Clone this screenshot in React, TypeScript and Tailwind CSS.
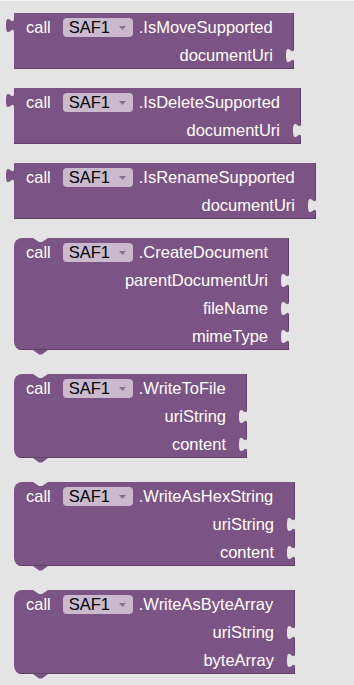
import React from "react";

const TAB = "M8,0 C8,10 0,-8 0,7.5 C0,23 8,5 8,15 Z";

type BlockDef = {
  name: string;
  params: string[];
  width: string;
  statement?: boolean;
  gap: string;
};

const blocks: BlockDef[] = [
  { name: ".IsMoveSupported", params: ["documentUri"], width: "w-[280px]", gap: "mb-[19px]" },
  { name: ".IsDeleteSupported", params: ["documentUri"], width: "w-[287px]", gap: "mb-[19px]" },
  { name: ".IsRenameSupported", params: ["documentUri"], width: "w-[302px]", gap: "mb-[19px]" },
  {
    name: ".CreateDocument",
    params: ["parentDocumentUri", "fileName", "mimeType"],
    width: "w-[275px]",
    statement: true,
    gap: "mb-[24px]",
  },
  { name: ".WriteToFile", params: ["uriString", "content"], width: "w-[233px]", statement: true, gap: "mb-[24px]" },
  { name: ".WriteAsHexString", params: ["uriString", "content"], width: "w-[281px]", statement: true, gap: "mb-[24px]" },
  { name: ".WriteAsByteArray", params: ["uriString", "byteArray"], width: "w-[281px]", statement: true, gap: "mb-0" },
];

function Dropdown() {
  return (
    <div className="flex h-[19px] w-[70px] items-center rounded-[4px] bg-[#cbbace] pl-[6px] text-black">
      <span>SAF1</span>
      <svg width="7" height="4" viewBox="0 0 7 4" className="ml-[9px] mt-[1px]">
        <path d="M0,0 L7,0 L3.5,4 Z" fill="#8c6b95" />
      </svg>
    </div>
  );
}

function Block({ name, params, width, statement, gap }: BlockDef) {
  return (
    <div
      className={`relative ${width} ${gap} ${
        statement ? "rounded-l-[8px]" : ""
      } bg-[#7c5385] text-white shadow-[inset_-1px_-1px_0_#5e3f66]`}
    >
      {/* output tab / notches */}
      {!statement && (
        <svg width="8" height="15" viewBox="0 0 8 15" className="absolute left-[-8px] top-[5px] overflow-visible">
          <path d={TAB} fill="#7c5385" />
        </svg>
      )}
      {statement && (
        <>
          <svg width="15" height="4" viewBox="0 0 15 4" className="absolute left-[19px] top-0">
            <path d="M0,0 L6,4 L9,4 L15,0 Z" fill="#e4e4e4" />
          </svg>
          <svg width="15" height="5" viewBox="0 0 15 5" className="absolute left-[19px] top-full">
            <path d="M0,0 L6,4.5 L9,4.5 L15,0 Z" fill="#7c5385" />
          </svg>
        </>
      )}

      <div className="flex h-[28px] items-center pl-3 pt-[1px]">
        <span>call</span>
        <div className="ml-3">
          <Dropdown />
        </div>
        <span className="ml-[6px]">{name}</span>
      </div>

      {params.map((p) => (
        <div key={p} className="relative flex h-[28px] items-center justify-end pr-[21px] pt-[1px]">
          <span>{p}</span>
          <svg width="8" height="15" viewBox="0 0 8 15" className="absolute right-0 top-[7px] overflow-visible">
            <path d={TAB} fill="#e4e4e4" />
          </svg>
        </div>
      ))}
    </div>
  );
}

export default function App() {
  return (
    <div
      className="flex h-[685px] w-[354px] flex-col overflow-hidden border-t border-[#f2f2f2] bg-[#e4e4e4] pl-[14px] pt-[12px] text-[16.5px] leading-none"
      style={{ fontFamily: "'Liberation Sans', Arial, sans-serif" }}
    >
      {blocks.map((b) => (
        <Block key={b.name} {...b} />
      ))}
    </div>
  );
}
